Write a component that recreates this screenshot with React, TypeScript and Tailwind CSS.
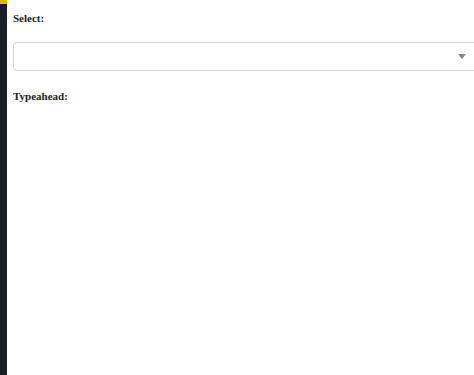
export default function App() {
  return (
    <div className="flex h-[375px] w-[474px] overflow-hidden bg-white">
      <div className="flex w-[7px] shrink-0 flex-col bg-[#1b1e26]">
        <div className="h-[4px] bg-[#d9b21c]" />
      </div>
      <div className="flex min-w-0 flex-1 flex-col pl-[6px] pt-[12px] font-['Liberation_Serif',serif]">
        <label className="text-[11px] font-bold leading-[13px] text-[#222]">Select:</label>
        <div className="mt-[17px] flex h-[29px] w-[466px] shrink-0 items-center justify-end rounded-[4px] border border-[#d4d4d4] bg-white pr-[12px]">
          <svg width="8" height="5" viewBox="0 0 8 5">
            <path d="M0 0h8L4 5z" fill="#888" />
          </svg>
        </div>
        <label className="mt-[19px] text-[11px] font-bold leading-[13px] text-[#222]">Typeahead:</label>
      </div>
    </div>
  );
}
